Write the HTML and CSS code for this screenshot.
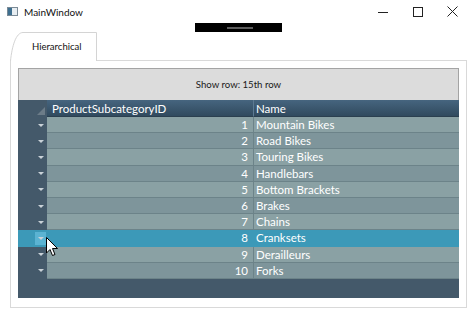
FILE: index.html
```
<!DOCTYPE html>
<html lang="en">
<head>
    <meta charset="UTF-8">
    <title>MainWindow</title>
    <link rel="stylesheet" href="styles.css">
</head>
<body>
    <div class="window">
        <div class="titlebar">
            <svg class="app-icon" width="11" height="9" viewBox="0 0 11 9">
                <rect x="0.5" y="0.5" width="10" height="8" fill="#e8eef2" stroke="#7a8a96"/>
                <rect x="1" y="1" width="4" height="7" fill="#3e6f8f"/>
            </svg>
            <span class="title">MainWindow</span>
            <div class="controls">
                <span class="ctl"><svg width="10" height="10" viewBox="0 0 10 10"><line x1="0" y1="5.5" x2="10" y2="5.5" stroke="#222"/></svg></span>
                <span class="ctl"><svg width="10" height="10" viewBox="0 0 10 10"><rect x="0.5" y="0.5" width="9" height="9" fill="none" stroke="#222"/></svg></span>
                <span class="ctl"><svg width="11" height="11" viewBox="0 0 11 11"><path d="M0.5 0.5 L10.5 10.5 M10.5 0.5 L0.5 10.5" stroke="#222"/></svg></span>
            </div>
        </div>

        <div class="devbar"><span></span></div>

        <div class="tabctl">
            <div class="tabstrip">
                <div class="tab">
                    <svg class="tab-shape" width="87" height="29" viewBox="0 0 87 29">
                        <path d="M0.5 29 C2 14 6 0.5 13 0.5 L86.5 0.5 L86.5 29" fill="#fff" stroke="#d4d4d4"/>
                    </svg>
                    <span>Hierarchical</span>
                </div>
            </div>
            <div class="tabpanel">
                <div class="box">
                    <div class="showrow">Show row: 15th row</div>
                    <div class="grid" id="grid">
                        <div class="hdr">
                            <div class="corner">
                                <svg width="8" height="8" viewBox="0 0 8 8"><polygon points="8,0 8,8 0,8" fill="#6c7c88"/></svg>
                            </div>
                            <div class="ch c1">ProductSubcategoryID</div>
                            <div class="ch c2">Name</div>
                        </div>
                    </div>
                </div>
            </div>
        </div>

        <svg class="cursor" width="13" height="20" viewBox="0 0 13 20">
            <path d="M0.5 0.5 L0.5 16 L4 12.5 L6.5 18.5 L9 17.5 L6.5 11.5 L11.5 11.5 Z" fill="#fff" stroke="#000"/>
        </svg>
    </div>

    <script>
        const rows = ["Mountain Bikes", "Road Bikes", "Touring Bikes", "Handlebars", "Bottom Brackets",
                      "Brakes", "Chains", "Cranksets", "Derailleurs", "Forks"];

        const grid = document.getElementById("grid");

        rows.forEach((name, index) => {
            let row = document.createElement("div");
            row.classList.add("row");
            if (index % 2 === 1) row.classList.add("alt");
            if (index === 7) row.classList.add("selected");

            row.innerHTML =
                '<div class="rh"><span class="mark"><svg width="6" height="3" viewBox="0 0 6 3"><polygon points="0,0 6,0 3,3" fill="#c9d2d8"/></svg></span></div>' +
                '<div class="cell c1">' + (index + 1) + '</div>' +
                '<div class="cell c2">' + name + '</div>';

            grid.appendChild(row);
        });
    </script>
</body>
</html>
```

FILE: styles.css
```
* {
    margin: 0;
    padding: 0;
    box-sizing: border-box;
}
body {
    background: white;
    font-family: Lato, "Noto Sans", sans-serif;
    width: 474px;
    height: 311px;
    overflow: hidden;
}
.window {
    position: relative;
    height: 311px;
}
.titlebar {
    height: 23px;
    display: flex;
    align-items: center;
    padding-left: 7px;
    font-size: 10px;
    color: #111;
}
.app-icon {
    margin-right: 6px;
}
.controls {
    margin-left: auto;
    display: flex;
    padding-right: 4px;
}
.ctl {
    width: 35px;
    height: 23px;
    display: flex;
    align-items: center;
    justify-content: center;
}
.devbar {
    position: absolute;
    left: 195px;
    top: 23px;
    width: 87px;
    height: 9px;
    background: #000;
}
.devbar span {
    position: absolute;
    left: 32px;
    top: 4px;
    width: 26px;
    height: 2px;
    background: #5c5c5c;
}
.tabctl {
    margin-top: 9px;
    padding-left: 10px;
    padding-right: 7px;
}
.tabstrip {
    display: flex;
    height: 28px;
}
.tab {
    position: relative;
    width: 87px;
    height: 29px;
    z-index: 2;
    display: flex;
    align-items: center;
    padding-left: 22px;
    font-size: 9.5px;
    color: #111;
}
.tab-shape {
    position: absolute;
    left: 0;
    top: 0;
}
.tab span {
    position: relative;
}
.tabpanel {
    border: 1px solid #d9d9d9;
    padding: 7px 7px 9px 7px;
    height: 248px;
}
.box {
    height: 230px;
    display: flex;
    flex-direction: column;
}
.showrow {
    height: 32px;
    background: #dcdcdc;
    border: 1px solid #a4a4a4;
    border-bottom: none;
    display: flex;
    align-items: center;
    justify-content: center;
    font-size: 9.6px;
    color: #1a1a1a;
}
.grid {
    flex: 1;
    background: #44596a;
    color: white;
    font-size: 11.5px;
}
.hdr {
    height: 17px;
    display: grid;
    grid-template-columns: 29px 207px 1fr;
    background: linear-gradient(#46657f, #2f485c);
}
.corner {
    background: #44596a;
    display: flex;
    align-items: flex-end;
    justify-content: flex-end;
    padding: 0 2px 2px 0;
}
.ch {
    display: flex;
    align-items: center;
    border-bottom: 1px solid #2b3f4f;
}
.ch.c1 {
    padding-left: 5px;
    border-right: 1px solid #5d7a92;
}
.ch.c2 {
    padding-left: 2px;
}
.row {
    height: 16.2px;
    display: grid;
    grid-template-columns: 29px 207px 1fr;
}
.rh {
    background: #44596a;
    display: flex;
    align-items: center;
    justify-content: flex-end;
    padding-right: 1px;
}
.mark {
    width: 11px;
    height: 13px;
    display: flex;
    align-items: center;
    justify-content: center;
}
.cell {
    background: #8aa1a4;
    border-bottom: 1px solid #6c8389;
    display: flex;
    align-items: center;
    white-space: nowrap;
}
.row.alt .cell {
    background: #7e959b;
}
.cell.c1 {
    justify-content: flex-end;
    padding-right: 5px;
    border-right: 1px solid #6c8389;
}
.cell.c2 {
    padding-left: 2px;
}
.row.selected .rh,
.row.selected .cell {
    background: #3c99b8;
    border-color: #3c99b8;
}
.row.selected .mark {
    background: #5bb3d2;
}
.cursor {
    position: absolute;
    left: 46px;
    top: 237px;
}
```
